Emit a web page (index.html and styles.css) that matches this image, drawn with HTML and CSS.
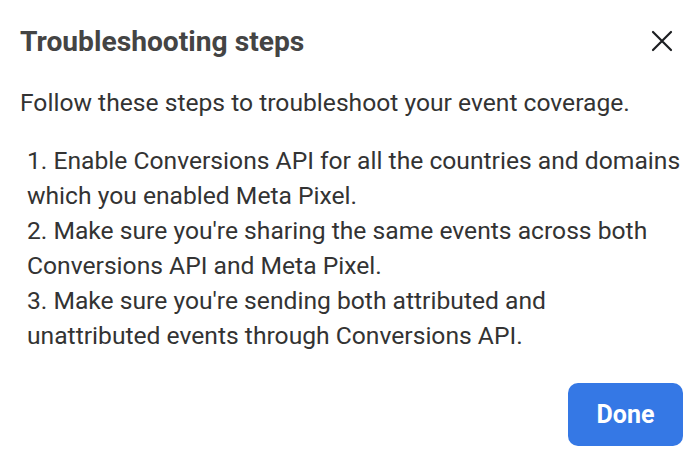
FILE: index.html
```html
<!DOCTYPE html>
<html lang="en">
<head>
<meta charset="utf-8">
<title>Troubleshooting steps</title>
<link rel="stylesheet" href="styles.css">
</head>
<body>
<div class="dialog">
  <div class="header">
    <h1 class="title">Troubleshooting steps</h1>
    <button class="close" aria-label="Close">
      <svg width="22" height="22" viewBox="0 0 22 22"><path d="M2 2L20 20M20 2L2 20" stroke="#1c1e21" stroke-width="2.2" stroke-linecap="round"/></svg>
    </button>
  </div>
  <p class="intro">Follow these steps to troubleshoot your event coverage.</p>
  <div class="steps">
    <div>1. Enable Conversions API for all the countries and domains which you enabled Meta Pixel.</div>
    <div>2. Make sure you're sharing the same events across both Conversions API and Meta Pixel.</div>
    <div>3. Make sure you're sending both attributed and unattributed events through Conversions API.</div>
  </div>
  <div class="footer">
    <button class="done">Done</button>
  </div>
</div>
</body>
</html>
```

FILE: styles.css
```css
html, body {
  margin: 0;
  padding: 0;
  background: #ffffff;
}
body {
  font-family: Roboto, "Liberation Sans", sans-serif;
  color: #333333;
}
.dialog {
  width: 700px;
  height: 455px;
  box-sizing: border-box;
  padding: 22px 17px 9px 20px;
  display: flex;
  flex-direction: column;
}
.header {
  display: flex;
  align-items: center;
  justify-content: space-between;
  height: 38px;
}
.title {
  margin: 0;
  font-size: 28.2px;
  font-weight: 700;
  color: #444444;
}
.close {
  border: 0;
  background: none;
  padding: 0;
  margin-right: 10px;
  width: 22px;
  height: 22px;
  display: flex;
}
.intro {
  margin: 25px 0 0 0;
  font-size: 24.65px;
  line-height: 35px;
}
.steps {
  margin-top: 23px;
  padding-left: 7px;
  font-size: 24.65px;
  line-height: 35px;
}
.footer {
  margin-top: auto;
  display: flex;
  justify-content: flex-end;
}
.done {
  width: 115px;
  height: 63px;
  border: 0;
  border-radius: 10px;
  background: #3578e5;
  color: #ffffff;
  font-family: Roboto, "Liberation Sans", sans-serif;
  font-size: 25px;
  font-weight: 700;
}
```
